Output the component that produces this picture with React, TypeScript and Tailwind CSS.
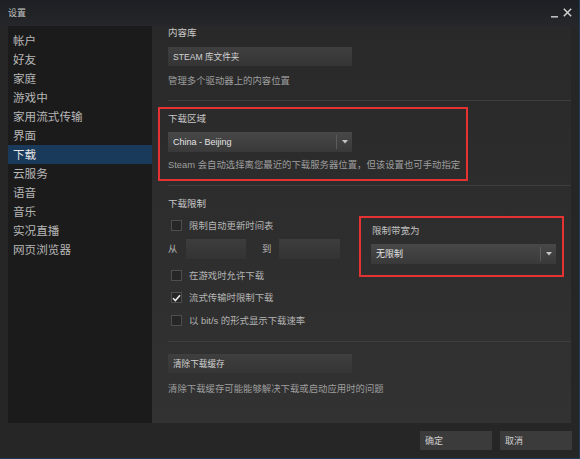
import React from "react";

const navItems = [
  "帐户",
  "好友",
  "家庭",
  "游戏中",
  "家用流式传输",
  "界面",
  "下载",
  "云服务",
  "语音",
  "音乐",
  "实况直播",
  "网页浏览器",
];

function Checkbox({ checked, label }: { checked?: boolean; label: string }) {
  return (
    <div className="flex items-center h-[15px]">
      <div className="ml-[3px] w-[11px] h-[11px] border border-[#4e4e4e] bg-[#262626] flex items-center justify-center">
        {checked && (
          <svg width="9" height="8" viewBox="0 0 9 8">
            <path d="M1 4.2 L3.4 6.6 L8 1.2" stroke="#e8e8e8" strokeWidth="1.6" fill="none" />
          </svg>
        )}
      </div>
      <span className="ml-[7px] text-[9.4px] leading-[14px] text-[#b4b4b4]">{label}</span>
    </div>
  );
}

function Dropdown({ value, width }: { value: string; width: string }) {
  return (
    <div className={`${width} h-[20px] flex items-center bg-gradient-to-b from-[#484848] to-[#393939]`}>
      <span className="flex-1 pl-[5px] text-[9px] leading-[14px] text-[#e4e4e4]">{value}</span>
      <div className="w-px h-[14px] bg-[#5c5c5c]" />
      <div className="w-[15px] flex items-center justify-center">
        <svg width="6" height="4" viewBox="0 0 6 4">
          <path d="M0 0 H6 L3 3.5 Z" fill="#c4c4c4" />
        </svg>
      </div>
    </div>
  );
}

function FlatButton({ label, width }: { label: string; width: string }) {
  return (
    <div className={`${width} h-[19px] flex items-center pl-[5px] bg-gradient-to-b from-[#3f3f3f] to-[#353535] text-[8.6px] leading-[12px] text-[#d2d2d2]`}>
      {label}
    </div>
  );
}

export default function App() {
  return (
    <div className="w-[580px] h-[459px] flex flex-col bg-[#262626] border-r border-b border-[#1f3c56] font-['Liberation_Sans','Noto_Sans_CJK_SC',sans-serif] select-none overflow-hidden">
      {/* title bar */}
      <div className="h-[26px] flex items-center justify-between pl-[8px] pr-[7px] bg-gradient-to-b from-[#1c1f23] to-[#25272a]">
        <span className="text-[9px] leading-[12px] text-[#c2c2c2]">设置</span>
        <div className="flex items-center gap-[5px]">
          <svg width="7" height="9" viewBox="0 0 7 9" className="mt-[2px]">
            <rect x="0" y="6" width="7" height="1.6" fill="#bdbdbd" />
          </svg>
          <svg width="9" height="9" viewBox="0 0 9 9" className="mb-[2px]">
            <path d="M0.8 0.8 L8.2 8.2 M8.2 0.8 L0.8 8.2" stroke="#cfcfcf" strokeWidth="1.5" />
          </svg>
        </div>
      </div>

      {/* body */}
      <div className="h-[397px] flex pl-[8px] pr-[8px]">
        {/* sidebar */}
        <div className="w-[144px] bg-[#1b1b1b] pt-[5px]">
          {navItems.map((item) => (
            <div
              key={item}
              className={`h-[19px] flex items-center pl-[5px] text-[11.6px] leading-[14px] ${
                item === "下载" ? "bg-[#1a3a5b] text-[#e6e6e6]" : "text-[#b6b6b6]"
              }`}
            >
              {item}
            </div>
          ))}
        </div>

        {/* content panel */}
        <div className="w-[419px] bg-gradient-to-b from-[#292929] to-[#323232] pl-[16px] flex flex-col">
          <div className="text-[9.5px] leading-[14px] text-[#c8c8c8]">内容库</div>
          <div className="mt-[7px]">
            <FlatButton label="STEAM 库文件夹" width="w-[184px]" />
          </div>
          <div className="mt-[8px] text-[9.4px] leading-[14px] text-[#9e9e9e]">管理多个驱动器上的内容位置</div>
          <div className="mt-[12px] h-px bg-[#3e3e3e]" />

          {/* download region */}
          <div className="relative">
            <div className="mt-[11px] text-[9.5px] leading-[14px] text-[#c8c8c8]">下载区域</div>
            <div className="mt-[6px]">
              <Dropdown value="China - Beijing" width="w-[184px]" />
            </div>
            <div className="mt-[6px] text-[9.4px] leading-[14px] text-[#9e9e9e]">
              Steam 会自动选择离您最近的下载服务器位置，但该设置也可手动指定
            </div>
            <div className="absolute left-[-10px] top-[6px] w-[310px] h-[74px] border-2 border-[#e53333] pointer-events-none" />
          </div>
          <div className="mt-[13px] h-px bg-[#3e3e3e]" />

          {/* download limits */}
          <div className="mt-[11px] text-[9.5px] leading-[14px] text-[#c8c8c8]">下载限制</div>
          <div className="flex">
            <div className="w-[203px] flex flex-col">
              <div className="mt-[7px]">
                <Checkbox label="限制自动更新时间表" />
              </div>
              <div className="mt-[6px] flex items-center h-[20px] text-[9.4px] leading-[14px] text-[#b4b4b4]">
                <span className="w-[18px]">从</span>
                <div className="w-[60px] h-[20px] bg-gradient-to-b from-[#3d3d3d] to-[#333333]" />
                <span className="ml-[16px] w-[17px]">到</span>
                <div className="w-[61px] h-[20px] bg-gradient-to-b from-[#3d3d3d] to-[#333333]" />
              </div>
              <div className="mt-[9px]">
                <Checkbox label="在游戏时允许下载" />
              </div>
              <div className="mt-[7px]">
                <Checkbox checked label="流式传输时限制下载" />
              </div>
              <div className="mt-[8px]">
                <Checkbox label="以 bit/s 的形式显示下载速率" />
              </div>
            </div>
            <div className="relative w-[185px] mt-[10px] self-start">
              <div className="mt-[3px] pl-[1px] text-[9.5px] leading-[14px] text-[#c0c0c0]">限制带宽为</div>
              <div className="mt-[6px]">
                <Dropdown value="无限制" width="w-[185px]" />
              </div>
              <div className="absolute left-[-12px] top-[-5px] w-[205px] h-[61px] border-2 border-[#e53333] pointer-events-none" />
            </div>
          </div>
          <div className="mt-[13px] h-px bg-[#3e3e3e]" />

          <div className="mt-[12px]">
            <FlatButton label="清除下载缓存" width="w-[184px]" />
          </div>
          <div className="mt-[9px] text-[9.4px] leading-[14px] text-[#9e9e9e]">清除下载缓存可能能够解决下载或启动应用时的问题</div>
        </div>
      </div>

      {/* footer buttons */}
      <div className="flex-1 flex justify-end items-start gap-[8px] pt-[8px] pr-[7px]">
        <div className="w-[72px] h-[19px] flex items-center pl-[5px] bg-[#3b3b3b] text-[9px] leading-[12px] text-[#cfcfcf]">确定</div>
        <div className="w-[72px] h-[19px] flex items-center pl-[5px] bg-[#3b3b3b] text-[9px] leading-[12px] text-[#cfcfcf]">取消</div>
      </div>
    </div>
  );
}
